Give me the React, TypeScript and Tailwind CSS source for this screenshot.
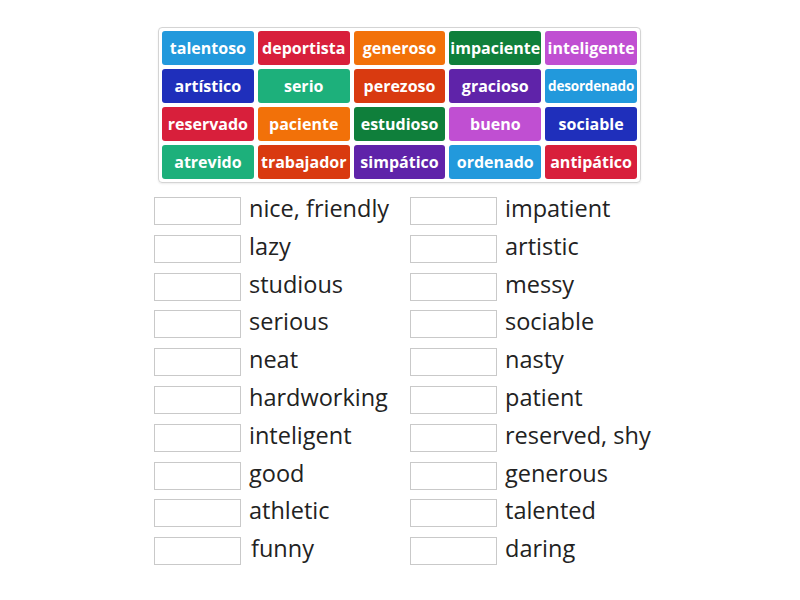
const tiles: { label: string; bg: string; small?: boolean }[] = [
  { label: "talentoso", bg: "bg-[#2299dc]" },
  { label: "deportista", bg: "bg-[#d81f3b]" },
  { label: "generoso", bg: "bg-[#f27109]" },
  { label: "impaciente", bg: "bg-[#0f7f3b]" },
  { label: "inteligente", bg: "bg-[#c04fd2]" },
  { label: "artístico", bg: "bg-[#1f2fbb]" },
  { label: "serio", bg: "bg-[#1db07b]" },
  { label: "perezoso", bg: "bg-[#d93a10]" },
  { label: "gracioso", bg: "bg-[#5f23a9]" },
  { label: "desordenado", bg: "bg-[#2299dc]", small: true },
  { label: "reservado", bg: "bg-[#d81f3b]" },
  { label: "paciente", bg: "bg-[#f27109]" },
  { label: "estudioso", bg: "bg-[#0f7f3b]" },
  { label: "bueno", bg: "bg-[#c04fd2]" },
  { label: "sociable", bg: "bg-[#1f2fbb]" },
  { label: "atrevido", bg: "bg-[#1db07b]" },
  { label: "trabajador", bg: "bg-[#d93a10]" },
  { label: "simpático", bg: "bg-[#5f23a9]" },
  { label: "ordenado", bg: "bg-[#2299dc]" },
  { label: "antipático", bg: "bg-[#d81f3b]" },
];

const leftWords = [
  "nice, friendly",
  "lazy",
  "studious",
  "serious",
  "neat",
  "hardworking",
  "inteligent",
  "good",
  "athletic",
  "funny",
];

const rightWords = [
  "impatient",
  "artistic",
  "messy",
  "sociable",
  "nasty",
  "patient",
  "reserved, shy",
  "generous",
  "talented",
  "daring",
];

function AnswerColumn({ words }: { words: string[] }) {
  return (
    <div className="flex flex-col w-[256px]">
      {words.map((word) => (
        <div key={word} className="h-[37.8px] flex items-start gap-[8px]">
          {/* empty drop slot */}
          <div className="w-[87px] h-[28px] shrink-0 border border-[#c9c9c9] bg-white" />
          <span
            className={`-mt-[3px] leading-[28px] text-[23.5px] text-[#222222] whitespace-nowrap ${
              word === "funny" ? "ml-[2px]" : ""
            }`}
          >
            {word}
          </span>
        </div>
      ))}
    </div>
  );
}

export default function App() {
  return (
    <div
      className="w-[800px] h-[600px] bg-white overflow-hidden"
      style={{ fontFamily: '"Open Sans", "Noto Sans", sans-serif' }}
    >
      {/* Word bank */}
      <div className="ml-[158px] mt-[27px] w-[483px] p-[3px] border border-[#d4d4d4] rounded-[4px] shadow-[0_1px_2px_rgba(0,0,0,0.08)]">
        <div className="grid grid-cols-5 gap-[4px]">
          {tiles.map((tile) => (
            <div
              key={tile.label}
              className={`${tile.bg} h-[34px] rounded-[3px] flex items-center justify-center text-white font-bold whitespace-nowrap ${
                tile.small ? "text-[13.5px] tracking-[-0.2px]" : "text-[16px]"
              }`}
            >
              {tile.label}
            </div>
          ))}
        </div>
      </div>

      {/* Matching rows */}
      <div className="mt-[14px] ml-[154px] flex">
        <AnswerColumn words={leftWords} />
        <AnswerColumn words={rightWords} />
      </div>
    </div>
  );
}
